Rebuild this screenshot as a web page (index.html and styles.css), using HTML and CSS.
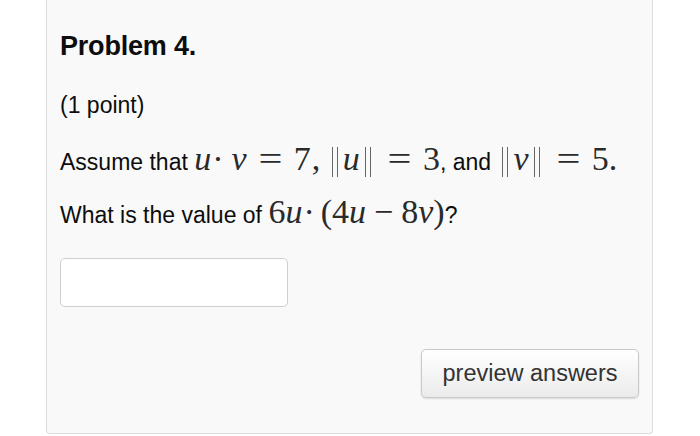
FILE: index.html
```html
<!DOCTYPE html>
<html>
<head>
<meta charset="utf-8">
<link rel="stylesheet" href="styles.css">
</head>
<body>
<div class="card">
  <h2 class="title">Problem 4.</h2>
  <p class="points">(1 point)</p>
  <p class="line line-a">Assume that <span class="m"><i>u</i><span class="dot">·</span><i class="v">v</i><span class="rel">=</span>7<span class="comma">,</span></span> <span class="m"><span class="norm"></span><i>u</i><span class="norm"></span><span class="rel">=</span>3</span>, and <span class="m"><span class="norm"></span><i>v</i><span class="norm"></span><span class="rel">=</span>5.</span></p>
  <p class="line line-b">What is the value of <span class="m">6<i>u</i><span class="dot">·</span><span class="paren">(</span>4<i>u</i><span class="bin">−</span>8<i>v</i><span class="paren">)</span></span>?</p>
  <div class="answer"><div class="input"></div></div>
  <div class="actions"><button class="btn">preview answers</button></div>
</div>
</body>
</html>
```
FILE: styles.css
```css
html, body {
  margin: 0;
  padding: 0;
  background: #ffffff;
}
body {
  font-family: "Liberation Sans", Arial, sans-serif;
  color: #0d0d0d;
  width: 700px;
  height: 436px;
  overflow: hidden;
}
.card {
  margin-left: 46px;
  width: 579px;
  height: 433px;
  padding: 0 13px;
  background: #f9f9f9;
  border: 1px solid #dcdcdc;
  border-top: none;
  border-radius: 0 0 4px 4px;
  display: flex;
  flex-direction: column;
}
.title {
  margin: 31px 0 0 0;
  font-size: 27px;
  line-height: 30px;
  font-weight: bold;
  letter-spacing: -0.2px;
}
.points {
  margin: 31px 0 0 0;
  font-size: 23px;
  line-height: 26px;
}
.line {
  margin: 0;
  font-size: 23px;
  line-height: 26px;
  white-space: nowrap;
}
.line-a { margin-top: 29px; }
.line-b { margin-top: 25px; }
.m {
  font-family: "Liberation Serif", "Times New Roman", serif;
  font-size: 34px;
  line-height: 0;
  color: #2a2a2a;
}
.m i {
  font-style: italic;
}
.dot {
  margin: 0 8px 0 1px;
}
.line-b .dot {
  margin: 0 6px 0 1px;
}
.rel {
  display: inline-block;
  transform: scaleX(1.25);
  margin: 0 14px;
}
.bin {
  margin: 0 8px;
}
.comma {
  margin-left: 1px;
}
.paren {
  font-size: 34px;
}
.norm {
  display: inline-block;
  width: 4px;
  height: 30px;
  border-left: 1.5px solid #666;
  border-right: 1.5px solid #666;
  vertical-align: -7px;
  margin: 0 5px;
}
.answer {
  margin-top: 30px;
}
.input {
  width: 226px;
  height: 47px;
  background: #fff;
  border: 1px solid #cfcfcf;
  border-radius: 5px;
}
.actions {
  margin-top: 42px;
  display: flex;
  justify-content: flex-end;
}
.btn {
  width: 218px;
  height: 49px;
  font-family: "Liberation Sans", Arial, sans-serif;
  font-size: 23.5px;
  color: #333;
  background: linear-gradient(#ffffff, #ebebeb);
  border: 1px solid #c8c8c8;
  border-radius: 5px;
  box-shadow: 0 1px 2px rgba(0,0,0,0.12);
  padding: 0;
}
```
